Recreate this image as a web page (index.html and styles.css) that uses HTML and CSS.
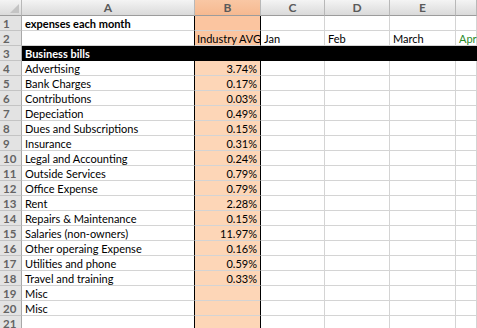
FILE: index.html
```html
<!DOCTYPE html>
<html lang="en">
<head>
    <meta charset="UTF-8">
    <title>expenses each month</title>
    <link rel="stylesheet" href="styles.css">
</head>
<body>
    <div class="sheet">
        <!-- column headers -->
        <div class="corner"><span class="tri"></span></div>
        <div class="colhead">A</div>
        <div class="colhead sel">B</div>
        <div class="colhead">C</div>
        <div class="colhead">D</div>
        <div class="colhead">E</div>
        <div class="colhead"></div>

        <div class="rowhead">1</div>
        <div class="cell a bold">expenses each month</div>
        <div class="cell b top"></div>
        <div class="cell"></div><div class="cell"></div><div class="cell"></div><div class="cell"></div>

        <div class="rowhead">2</div>
        <div class="cell a"></div>
        <div class="cell b top">Industry AVG</div>
        <div class="cell">Jan</div><div class="cell">Feb</div><div class="cell">March</div><div class="cell green">April</div>

        <div class="rowhead">3</div>
        <div class="cell dark bold">Business bills</div>
        <div class="cell dark"></div>
        <div class="cell dark"></div><div class="cell dark"></div><div class="cell dark"></div><div class="cell dark"></div>

        <div class="rowhead">4</div>
        <div class="cell a">Advertising</div>
        <div class="cell b num">3.74%</div>
        <div class="cell"></div><div class="cell"></div><div class="cell"></div><div class="cell"></div>

        <div class="rowhead">5</div>
        <div class="cell a">Bank Charges</div>
        <div class="cell b num">0.17%</div>
        <div class="cell"></div><div class="cell"></div><div class="cell"></div><div class="cell"></div>

        <div class="rowhead">6</div>
        <div class="cell a">Contributions</div>
        <div class="cell b num">0.03%</div>
        <div class="cell"></div><div class="cell"></div><div class="cell"></div><div class="cell"></div>

        <div class="rowhead">7</div>
        <div class="cell a">Depeciation</div>
        <div class="cell b num">0.49%</div>
        <div class="cell"></div><div class="cell"></div><div class="cell"></div><div class="cell"></div>

        <div class="rowhead">8</div>
        <div class="cell a">Dues and Subscriptions</div>
        <div class="cell b num">0.15%</div>
        <div class="cell"></div><div class="cell"></div><div class="cell"></div><div class="cell"></div>

        <div class="rowhead">9</div>
        <div class="cell a">Insurance</div>
        <div class="cell b num">0.31%</div>
        <div class="cell"></div><div class="cell"></div><div class="cell"></div><div class="cell"></div>

        <div class="rowhead">10</div>
        <div class="cell a">Legal and Accounting</div>
        <div class="cell b num">0.24%</div>
        <div class="cell"></div><div class="cell"></div><div class="cell"></div><div class="cell"></div>

        <div class="rowhead">11</div>
        <div class="cell a">Outside Services</div>
        <div class="cell b num">0.79%</div>
        <div class="cell"></div><div class="cell"></div><div class="cell"></div><div class="cell"></div>

        <div class="rowhead">12</div>
        <div class="cell a">Office Expense</div>
        <div class="cell b num">0.79%</div>
        <div class="cell"></div><div class="cell"></div><div class="cell"></div><div class="cell"></div>

        <div class="rowhead">13</div>
        <div class="cell a">Rent</div>
        <div class="cell b num">2.28%</div>
        <div class="cell"></div><div class="cell"></div><div class="cell"></div><div class="cell"></div>

        <div class="rowhead">14</div>
        <div class="cell a">Repairs &amp; Maintenance</div>
        <div class="cell b num">0.15%</div>
        <div class="cell"></div><div class="cell"></div><div class="cell"></div><div class="cell"></div>

        <div class="rowhead">15</div>
        <div class="cell a">Salaries (non-owners)</div>
        <div class="cell b num">11.97%</div>
        <div class="cell"></div><div class="cell"></div><div class="cell"></div><div class="cell"></div>

        <div class="rowhead">16</div>
        <div class="cell a">Other operaing Expense</div>
        <div class="cell b num">0.16%</div>
        <div class="cell"></div><div class="cell"></div><div class="cell"></div><div class="cell"></div>

        <div class="rowhead">17</div>
        <div class="cell a">Utilities and phone</div>
        <div class="cell b num">0.59%</div>
        <div class="cell"></div><div class="cell"></div><div class="cell"></div><div class="cell"></div>

        <div class="rowhead">18</div>
        <div class="cell a">Travel and training</div>
        <div class="cell b num">0.33%</div>
        <div class="cell"></div><div class="cell"></div><div class="cell"></div><div class="cell"></div>

        <div class="rowhead">19</div>
        <div class="cell a">Misc</div>
        <div class="cell b"></div>
        <div class="cell"></div><div class="cell"></div><div class="cell"></div><div class="cell"></div>

        <div class="rowhead">20</div>
        <div class="cell a">Misc</div>
        <div class="cell b"></div>
        <div class="cell"></div><div class="cell"></div><div class="cell"></div><div class="cell"></div>

        <div class="rowhead">21</div>
        <div class="cell a"></div>
        <div class="cell b"></div>
        <div class="cell"></div><div class="cell"></div><div class="cell"></div><div class="cell"></div>
    </div>
</body>
</html>
```

FILE: styles.css
```css
body { margin: 0; background: #fff; overflow: hidden; font-family: Lato, "Liberation Sans", sans-serif; font-size: 11px; color: #000; }

.sheet {
    display: grid;
    grid-template-columns: 22px 173px 66px 64px 65px 66px 21px;
    grid-template-rows: 16px;
    grid-auto-rows: 15px;
    width: 477px;
}

.sheet > div {
    box-sizing: border-box;
    border-right: 1px solid #d4d4d4;
    border-bottom: 1px solid #d4d4d4;
    white-space: nowrap;
    overflow: hidden;
    line-height: 15px;
}

/* header row */
.corner, .colhead {
    background: linear-gradient(#f4f4f4, #dadada);
    border-right-color: #b8b8b8 !important;
    border-bottom-color: #9c9c9c !important;
}
.corner { position: relative; }
.tri {
    position: absolute;
    right: 2px;
    bottom: 2px;
    width: 0;
    height: 0;
    border-left: 9px solid transparent;
    border-bottom: 9px solid #c4c4c4;
}
.colhead {
    text-align: center;
    font-weight: bold;
    color: #5a5a5a;
    font-size: 12px;
    line-height: 15px;
}
.colhead.sel { background: linear-gradient(#f9c7a4, #f6b990); }

/* row numbers */
.rowhead {
    background: #e3e3e3;
    border-right-color: #a8a8a8 !important;
    border-bottom-color: #c4c4c4 !important;
    color: #646464;
    font-weight: bold;
    padding-left: 3px;
    font-size: 11.5px;
}

.cell { padding-left: 3px; }
.cell.a { border-right-color: #000; }
.cell.b { background: #fdd6b7; border-right-color: #000; padding-left: 2px; }
.cell.top { background: #fbc5a0; }
.num { text-align: right; padding-right: 3px; }
.bold { font-weight: bold; }
.sheet > .green { color: #2a8a2a; overflow: visible; }

.cell.dark { background: #000; color: #fff; border-color: #000; }
```
